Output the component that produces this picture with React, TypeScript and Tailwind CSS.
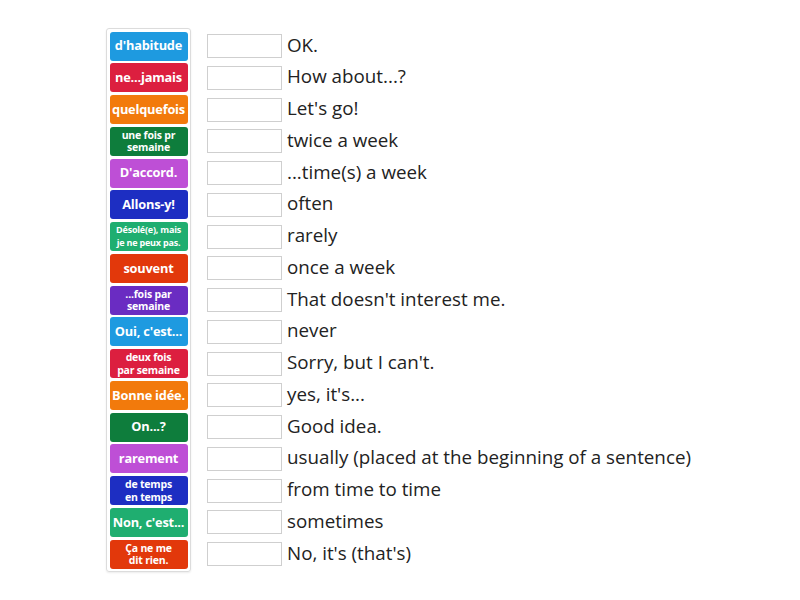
const tiles: { lines: string[]; bg: string; size: string }[] = [
  { lines: ["d'habitude"], bg: "bg-[#1e9ae0]", size: "text-[12.8px]" },
  { lines: ["ne...jamais"], bg: "bg-[#dc1f3f]", size: "text-[12.8px]" },
  { lines: ["quelquefois"], bg: "bg-[#f27a0c]", size: "text-[12.8px]" },
  { lines: ["une fois pr", "semaine"], bg: "bg-[#0e7d3c]", size: "text-[10.5px] leading-[12.5px]" },
  { lines: ["D'accord."], bg: "bg-[#be4fd6]", size: "text-[12.8px]" },
  { lines: ["Allons-y!"], bg: "bg-[#1d2ec2]", size: "text-[12.8px]" },
  { lines: ["Désolé(e), mais", "je ne peux pas."], bg: "bg-[#1fae70]", size: "text-[9px] leading-[12.5px]" },
  { lines: ["souvent"], bg: "bg-[#e2380b]", size: "text-[12.8px]" },
  { lines: ["...fois par", "semaine"], bg: "bg-[#6a2cc2]", size: "text-[10.5px] leading-[12.5px]" },
  { lines: ["Oui, c'est..."], bg: "bg-[#1e9ae0]", size: "text-[12.8px]" },
  { lines: ["deux fois", "par semaine"], bg: "bg-[#dc1f3f]", size: "text-[10.5px] leading-[12.5px]" },
  { lines: ["Bonne idée."], bg: "bg-[#f27a0c]", size: "text-[12.8px]" },
  { lines: ["On...?"], bg: "bg-[#0e7d3c]", size: "text-[12.8px]" },
  { lines: ["rarement"], bg: "bg-[#be4fd6]", size: "text-[12.8px]" },
  { lines: ["de temps", "en temps"], bg: "bg-[#1d2ec2]", size: "text-[10.5px] leading-[12.5px]" },
  { lines: ["Non, c'est..."], bg: "bg-[#1fae70]", size: "text-[12.8px]" },
  { lines: ["Ça ne me", "dit rien."], bg: "bg-[#e2380b]", size: "text-[10.5px] leading-[12.5px]" },
];

const answers = [
  "OK.",
  "How about...?",
  "Let's go!",
  "twice a week",
  "...time(s) a week",
  "often",
  "rarely",
  "once a week",
  "That doesn't interest me.",
  "never",
  "Sorry, but I can't.",
  "yes, it's...",
  "Good idea.",
  "usually (placed at the beginning of a sentence)",
  "from time to time",
  "sometimes",
  "No, it's (that's)",
];

export default function App() {
  return (
    <div className="flex h-[600px] w-[800px] items-start bg-white pl-[106px] pt-[28px] font-['Open_Sans',sans-serif]">
      {/* Tiles */}
      <div className="flex flex-col gap-[2.75px] rounded-[3px] border border-[#dcdcdc] p-[2.5px] shadow-[0_1px_2px_rgba(0,0,0,0.08)]">
        {tiles.map((t) => (
          <div
            key={t.lines.join(" ")}
            className={`flex h-[29px] w-[78px] flex-col items-center justify-center whitespace-nowrap rounded-[3px] text-center font-bold tracking-[-0.2px] text-white ${t.bg} ${t.size}`}
          >
            {t.lines.map((l) => (
              <span key={l}>{l}</span>
            ))}
          </div>
        ))}
      </div>

      {/* Answers */}
      <div className="ml-[16px] flex flex-col gap-[2.75px] pt-[3.5px]">
        {answers.map((a) => (
          <div key={a} className="flex h-[29px] items-center">
            <div className="h-[24px] w-[75px] border border-[#cfcfcf] bg-white" />
            <span className="mb-[3px] ml-[5px] whitespace-nowrap text-[18.8px] leading-[24px] text-[#222]">{a}</span>
          </div>
        ))}
      </div>
    </div>
  );
}
